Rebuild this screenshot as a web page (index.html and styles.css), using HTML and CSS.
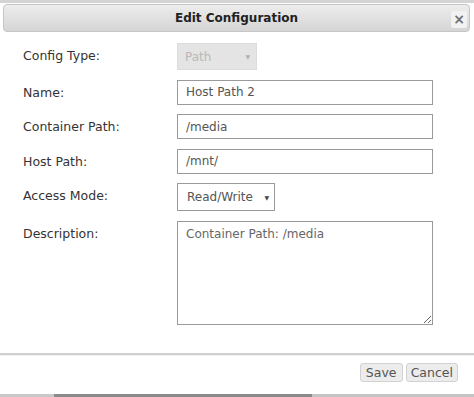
FILE: index.html
```html
<!DOCTYPE html>
<html>
<head>
<meta charset="utf-8">
<link rel="stylesheet" href="styles.css">
</head>
<body>
<div class="page">
  <div class="top-strip"></div>
  <div class="titlebar">
    <span class="title">Edit Configuration</span>
    <span class="close">&times;</span>
  </div>
  <div class="form">
    <div class="row">
      <label class="label">Config Type:</label>
      <div class="select disabled r-config"><span>Path</span><span class="arrow">&#9660;</span></div>
    </div>
    <div class="row">
      <label class="label">Name:</label>
      <input class="input" type="text" value="Host Path 2">
    </div>
    <div class="row">
      <label class="label">Container Path:</label>
      <input class="input" type="text" value="/media">
    </div>
    <div class="row">
      <label class="label">Host Path:</label>
      <input class="input" type="text" value="/mnt/">
    </div>
    <div class="row">
      <label class="label">Access Mode:</label>
      <div class="select r-access"><span>Read/Write</span><span class="arrow">&#9660;</span></div>
    </div>
    <div class="row">
      <label class="label">Description:</label>
      <textarea class="textarea">Container Path: /media</textarea>
    </div>
  </div>
  <div class="spacer"></div>
  <div class="separator"></div>
  <div class="footer">
    <button class="btn">Save</button>
    <button class="btn">Cancel</button>
  </div>
  <div class="bottom-strip">
    <div class="seg seg-a"></div>
    <div class="seg seg-b"></div>
    <div class="seg seg-c"></div>
  </div>
</div>
</body>
</html>
```
FILE: styles.css
```css
* { box-sizing: border-box; }
html, body { margin: 0; padding: 0; background: #fff; }
body {
  width: 474px;
  height: 397px;
  overflow: hidden;
  font-family: "DejaVu Sans", Verdana, sans-serif;
  color: #333;
}
.page {
  height: 397px;
  display: flex;
  flex-direction: column;
}
.top-strip {
  height: 3px;
  background: #d4d4d4;
  margin-bottom: 1px;
}
.titlebar {
  position: relative;
  height: 28px;
  margin: 0 4px 0 3px;
  border: 1px solid #c6c6c6;
  border-radius: 4px;
  background: linear-gradient(#ededed, #d5d5d5);
  display: flex;
  align-items: center;
  justify-content: center;
}
.title {
  font-weight: bold;
  font-size: 12px;
  color: #222;
}
.close {
  position: absolute;
  right: 2px;
  top: 6px;
  width: 16px;
  height: 17px;
  background: #f2f2f2;
  border-radius: 2px;
  color: #707070;
  font-size: 14px;
  font-weight: bold;
  line-height: 16px;
  text-align: center;
}
.form {
  margin-top: 11px;
  padding-left: 23px;
  display: flex;
  flex-direction: column;
  gap: 9.5px;
}
.row {
  display: flex;
  align-items: flex-start;
}
.label {
  width: 154px;
  font-size: 12.5px;
  line-height: 25px;
  color: #333;
}
.input {
  width: 256px;
  height: 25px;
  border: 1px solid #9a9a9a;
  padding: 0 8px;
  font-family: "DejaVu Sans", Verdana, sans-serif;
  font-size: 12px;
  color: #555;
  background: #fff;
  outline: none;
}
.select {
  height: 27px;
  display: flex;
  align-items: center;
  justify-content: space-between;
  font-size: 12px;
  border: 1px solid #9a9a9a;
  color: #555;
  background: #fff;
}
.select .arrow {
  font-size: 6px;
}
.r-config {
  width: 80px;
  padding: 0 6px 0 7px;
  background: #e4e4e4;
  border-color: #dcdcdc;
  color: #b9b9b9;
}
.r-config .arrow { color: #b0b0b0; }
.r-access {
  width: 98px;
  padding: 0 5px 0 9px;
  height: 28px;
}
.r-access .arrow { color: #444; }
.textarea {
  width: 256px;
  height: 104px;
  border: 1px solid #9a9a9a;
  padding: 5px 8px;
  font-family: "DejaVu Sans", Verdana, sans-serif;
  font-size: 12px;
  color: #666;
  resize: both;
  outline: none;
}
.spacer { flex: 1; }
.separator {
  height: 2px;
  background: #cfcfcf;
  border-bottom: 1px solid #f0f0f0;
  box-sizing: content-box;
}
.footer {
  height: 38px;
  display: flex;
  justify-content: flex-end;
  align-items: flex-start;
  gap: 3px;
  padding: 7px 16px 0 0;
}
.btn {
  min-width: 43px;
  height: 19px;
  padding: 0 4px;
  border: 1px solid #d2d2d2;
  border-radius: 3px;
  background: #ececec;
  font-family: "DejaVu Sans", Verdana, sans-serif;
  font-size: 12.5px;
  color: #555;
  line-height: 17px;
}
.bottom-strip {
  height: 3px;
  display: flex;
}
.seg { height: 3px; }
.seg-a { width: 54px; background: #c9c9c9; }
.seg-b { width: 258px; background: #8a8a8a; }
.seg-c { flex: 1; background: #c4c4c4; }
```
